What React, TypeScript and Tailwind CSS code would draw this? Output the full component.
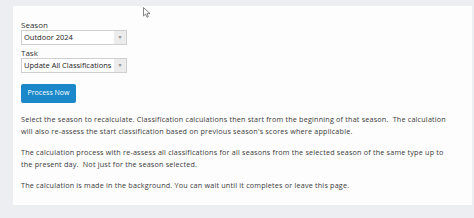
export default function App() {
  const selects = [
    { label: 'Season', value: 'Outdoor 2024' },
    { label: 'Task', value: 'Update All Classifications' },
  ];

  return (
    <div className="relative w-[474px] h-[218px] bg-[#eceef1] pt-[6px] pl-[13px] pr-[2px] overflow-hidden">
      <div className="bg-[#fdfdfd] h-[199px] pl-[8px] pt-[14px]">
        {selects.map(({ label, value }) => (
          <div key={label} className="mb-[3px]">
            <div className="text-[8px] leading-[10px] text-[#333] font-['Open_Sans',sans-serif]">{label}</div>
            <div className="w-[106px] h-[15px] border border-[#cfcfcf] bg-white flex items-center">
              <span className="flex-1 pl-[2px] text-[7.5px] text-[#222] font-['Open_Sans',sans-serif] leading-none">{value}</span>
              <span className="w-[12px] h-full bg-[#ececec] flex items-center justify-center text-[5px] text-[#888]">▼</span>
            </div>
          </div>
        ))}
        <button className="mt-[8px] w-[55px] h-[19px] rounded-[2px] bg-[#1a88c9] text-white text-[7px] font-['Open_Sans',sans-serif]">
          Process Now
        </button>
        <div className="mt-[10px] pr-[26px] text-[7.2px] leading-[12px] text-[#3a3a3a] font-['Open_Sans',sans-serif] tracking-[0.2px]">
          <p>
            Select the season to recalculate. Classification calculations then start from the beginning of that season.&nbsp; The calculation will also re-assess the start classification based on previous season's scores where applicable.
          </p>
          <p className="mt-[9px]">
            The calculation process with re-assess all classifications for all seasons from the selected season of the same type up to the present day.&nbsp; Not just for the season selected.
          </p>
          <p className="mt-[9px]">
            The calculation is made in the background. You can wait until it completes or leave this page.
          </p>
        </div>
      </div>
      {/* mouse pointer captured in the screenshot */}
      <svg className="absolute left-[143px] top-[7px]" width="8" height="11" viewBox="0 0 8 11">
        <path d="M0.5 0.5 L0.5 9 L2.6 7 L4 10.3 L5.3 9.7 L4 6.6 L7 6.6 Z" fill="#fff" stroke="#666" strokeWidth="0.8" strokeLinejoin="round" />
      </svg>
    </div>
  );
}
